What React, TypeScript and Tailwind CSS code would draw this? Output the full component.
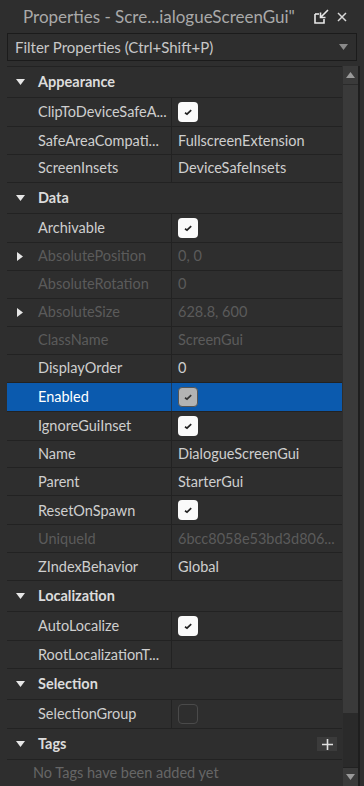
import React from "react";

type Row =
  | { kind: "header"; label: string; plus?: boolean }
  | {
      kind: "prop";
      label: string;
      value?: string;
      check?: "on" | "off" | "sel";
      dim?: boolean;
      expand?: boolean;
      selected?: boolean;
    };

const rows: Row[] = [
  { kind: "header", label: "Appearance" },
  { kind: "prop", label: "ClipToDeviceSafeA...", check: "on" },
  { kind: "prop", label: "SafeAreaCompati...", value: "FullscreenExtension" },
  { kind: "prop", label: "ScreenInsets", value: "DeviceSafeInsets" },
  { kind: "header", label: "Data" },
  { kind: "prop", label: "Archivable", check: "on" },
  { kind: "prop", label: "AbsolutePosition", value: "0, 0", dim: true, expand: true },
  { kind: "prop", label: "AbsoluteRotation", value: "0", dim: true },
  { kind: "prop", label: "AbsoluteSize", value: "628.8, 600", dim: true, expand: true },
  { kind: "prop", label: "ClassName", value: "ScreenGui", dim: true },
  { kind: "prop", label: "DisplayOrder", value: "0" },
  { kind: "prop", label: "Enabled", check: "sel", selected: true },
  { kind: "prop", label: "IgnoreGuiInset", check: "on" },
  { kind: "prop", label: "Name", value: "DialogueScreenGui" },
  { kind: "prop", label: "Parent", value: "StarterGui" },
  { kind: "prop", label: "ResetOnSpawn", check: "on" },
  { kind: "prop", label: "UniqueId", value: "6bcc8058e53bd3d806...", dim: true },
  { kind: "prop", label: "ZIndexBehavior", value: "Global" },
  { kind: "header", label: "Localization" },
  { kind: "prop", label: "AutoLocalize", check: "on" },
  { kind: "prop", label: "RootLocalizationT...", value: "" },
  { kind: "header", label: "Selection" },
  { kind: "prop", label: "SelectionGroup", check: "off" },
  { kind: "header", label: "Tags", plus: true },
];

function Tick({ color }: { color: string }) {
  return (
    <svg width="10" height="8" viewBox="0 0 10 8">
      <path d="M2 4.8 L4 6.2 L8.2 2.2" fill="none" stroke={color} strokeWidth="1.7" />
    </svg>
  );
}

function Checkbox({ state }: { state: "on" | "off" | "sel" }) {
  if (state === "off")
    return <div className="w-[20px] h-[20px] rounded-[4px] border border-[#4a4a4a]" />;
  if (state === "sel")
    return (
      <div className="w-[20px] h-[20px] rounded-[4px] bg-[#b3b3b3] border border-[#555] flex items-center justify-center">
        <Tick color="#333" />
      </div>
    );
  return (
    <div className="w-[20px] h-[20px] rounded-[4px] bg-[#fafafa] flex items-center justify-center">
      <Tick color="#222" />
    </div>
  );
}

function DownTri({ color = "#e6e6e6" }: { color?: string }) {
  return (
    <svg width="9" height="6" viewBox="0 0 9 6">
      <path d="M0 0 H9 L4.5 6 Z" fill={color} />
    </svg>
  );
}

function PropRow({ row }: { row: Extract<Row, { kind: "prop" }> }) {
  const h = row.check ? "h-[29px]" : "h-[28px]";
  const text = row.selected ? "text-white" : row.dim ? "text-[#5b5b5b]" : "text-[#cfcfcf]";
  return (
    <div className={`flex ${h} border-b border-[#222] ${row.selected ? "bg-[#0b5aae]" : ""}`}>
      <div className={`w-[165px] shrink-0 flex items-center border-r ${row.selected ? "border-[#1c3a5c]" : "border-[#222]"}`}>
        <div className="w-[31px] shrink-0 pl-[10px] flex items-center">
          {row.expand && (
            <svg width="6" height="9" viewBox="0 0 6 9">
              <path d="M0 0 L6 4.5 L0 9 Z" fill="#e6e6e6" />
            </svg>
          )}
        </div>
        <span className={`text-[14.5px] ${text} whitespace-nowrap`}>{row.label}</span>
      </div>
      <div className="flex-1 flex items-center pl-[6px]">
        {row.check ? (
          <Checkbox state={row.check} />
        ) : (
          <span className={`text-[14.5px] ${text} whitespace-nowrap`}>{row.value}</span>
        )}
      </div>
    </div>
  );
}

function HeaderRow({ row }: { row: Extract<Row, { kind: "header" }> }) {
  return (
    <div className="flex items-center h-[31px] border-b border-[#222] pr-[5px]">
      <div className="w-[31px] shrink-0 pl-[9px] flex items-center">
        <DownTri />
      </div>
      <span className="text-[14.5px] font-bold text-[#dcdcdc] flex-1">{row.label}</span>
      {row.plus && (
        <div className="w-[20px] h-[14px] bg-[#3b3b3b] flex items-center justify-center">
          <svg width="11" height="11" viewBox="0 0 11 11">
            <path d="M5.5 0 V11 M0 5.5 H11" stroke="#e0e0e0" strokeWidth="1.6" />
          </svg>
        </div>
      )}
    </div>
  );
}

export default function App() {
  return (
    <div className="w-[364px] h-[786px] bg-[#2e2e2e] flex flex-col overflow-hidden font-['Lato','Open_Sans',sans-serif]">
      <div className="h-[33px] shrink-0 flex items-center pl-[23px] pr-[17px]">
        <span className="text-[17px] text-[#a9a9a9] whitespace-nowrap">
          Properties - Scre...ialogueScreenGui"
        </span>
        <div className="flex-1" />
        <svg width="16" height="16" viewBox="0 0 16 16" className="mr-[7px]">
          <path d="M1 5 V14 H10 V10" fill="none" stroke="#e8e8e8" strokeWidth="1.6" />
          <path d="M1 5 H5" fill="none" stroke="#e8e8e8" strokeWidth="1.6" />
          <path d="M14 1 L7 8 M6.5 3.5 V8.5 H11.5" fill="none" stroke="#e8e8e8" strokeWidth="1.6" />
        </svg>
        <svg width="10" height="10" viewBox="0 0 10 10">
          <path d="M1 1 L9 9 M9 1 L1 9" stroke="#d8d8d8" strokeWidth="1.5" />
        </svg>
      </div>
      <div className="mx-[7px] h-[28px] shrink-0 border border-[#1b1b1b] flex items-center pl-[7px] pr-[8px]">
        <span className="text-[15px] text-[#c8c8c8] flex-1">Filter Properties (Ctrl+Shift+P)</span>
        <DownTri color="#8a8a8a" />
      </div>
      <div className="flex flex-1 mt-[5px] min-h-0 ml-[7px]">
        <div className="w-[335px] flex flex-col border-t border-[#222]">
          {rows.map((r, i) =>
            r.kind === "header" ? <HeaderRow key={i} row={r} /> : <PropRow key={i} row={r} />
          )}
          <div className="h-[26px] pl-[26px] flex items-center">
            <span className="text-[14.5px] text-[#666]">No Tags have been added yet</span>
          </div>
        </div>
        <div className="w-[15px] flex flex-col ml-[1px] bg-[#2a2a2a]">
          <div className="h-[19px] bg-[#3a3a3a] border-b border-[#2a2a2a] flex items-center justify-center">
            <svg width="9" height="6" viewBox="0 0 9 6">
              <path d="M0 6 H9 L4.5 0 Z" fill="#9a9a9a" />
            </svg>
          </div>
          <div className="h-[628px] bg-[#3a3a3a]" />
          <div className="flex-1" />
          <div className="h-[19px] bg-[#3a3a3a] border-t border-[#222] flex items-center justify-center">
            <DownTri color="#9a9a9a" />
          </div>
        </div>
        <div className="w-[2px] bg-[#1e1e1e]" />
      </div>
    </div>
  );
}
